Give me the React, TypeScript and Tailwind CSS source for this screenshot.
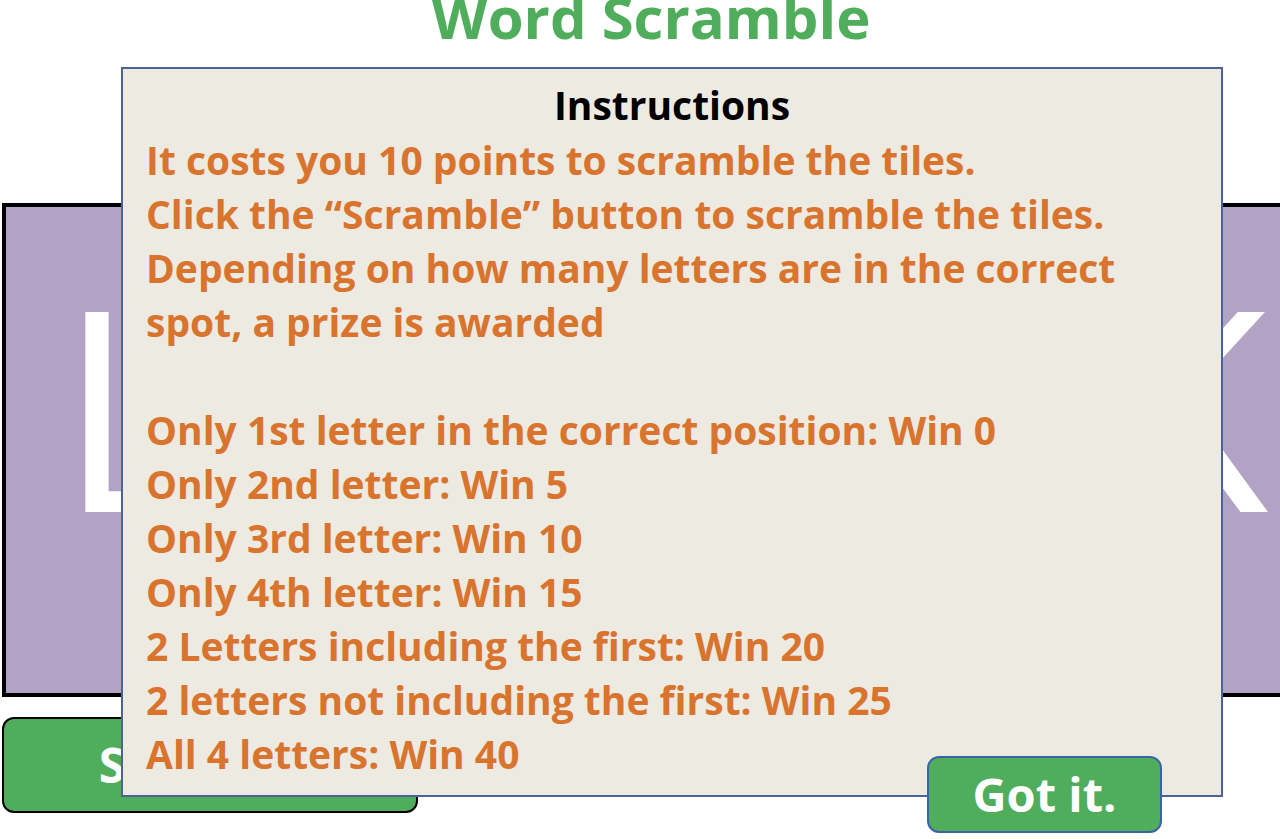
const LINES = [
  "It costs you 10 points to scramble the tiles.",
  "Click the \u201cScramble\u201d button to scramble the tiles.",
  "Depending on how many letters are in the correct",
  "spot, a prize is awarded",
  "",
  "Only 1st letter in the correct position: Win 0",
  "Only 2nd letter: Win 5",
  "Only 3rd letter: Win 10",
  "Only 4th letter: Win 15",
  "2 Letters including the first: Win 20",
  "2 letters not including the first: Win 25",
  "All 4 letters: Win 40",
]

const TILES = ["L", "I", "N", "K"]

export default function App() {
  return (
    <div className="relative w-[1280px] h-[839px] overflow-hidden bg-white font-['Open_Sans',sans-serif]">
      <h1 className="-mt-[12px] pl-[22px] text-center text-[58px] font-bold leading-none text-[#4fad5b]">Word Scramble</h1>

      <div className="mt-[157px] ml-[2px] flex h-[494px] w-[1300px] items-start justify-between border-4 border-black bg-[#b2a3c5] pl-[52px] pr-[30px] pt-[57px]">
        {TILES.map((t, i) => (
          <span key={i} className="text-[280px] font-medium leading-none text-white">{t}</span>
        ))}
      </div>

      <button className="mt-[20px] ml-[2px] h-[96px] w-[416px] rounded-[12px] border-2 border-black bg-[#4fad5b] text-[48px] font-bold text-white">
        Scramble
      </button>

      {/* instructions popup */}
      <div className="absolute left-[121px] top-[67px] h-[730px] w-[1102px] border-2 border-[#4a6496] bg-[#edeae2] px-[23px] pt-[16px]">
        <h2 className="text-center text-[39px] font-bold leading-none text-black">Instructions</h2>
        <div className="mt-[9px]">
          {LINES.map((line, i) => (
            <p key={i} className="h-[54px] whitespace-nowrap text-[39px] font-bold leading-[54px] text-[#d9742f]">{line}</p>
          ))}
        </div>
        <button className="absolute left-[804px] top-[687px] flex h-[77px] w-[235px] items-center justify-center rounded-[12px] border-2 border-[#3b64a8] bg-[#4fad5b] text-[47px] font-bold text-white">
          Got it.
        </button>
      </div>
    </div>
  )
}
